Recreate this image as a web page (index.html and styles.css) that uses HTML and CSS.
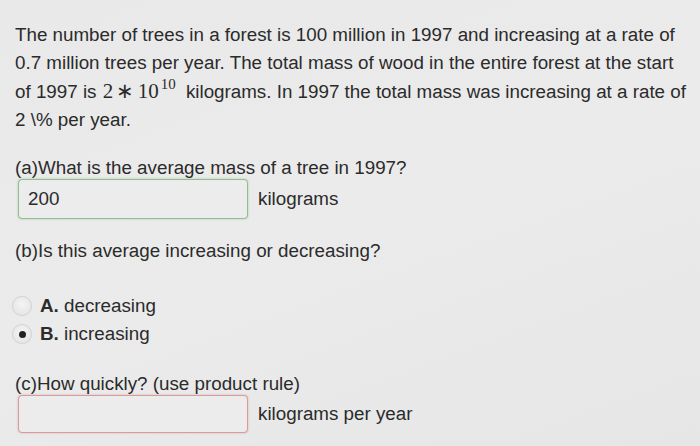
FILE: index.html
```html
<!DOCTYPE html>
<html>
<head>
<meta charset="utf-8">
<link rel="stylesheet" href="styles.css">
</head>
<body>
<div class="page">
  <p class="intro">The number of trees in a forest is 100 million in 1997 and increasing at a rate of<br>0.7 million trees per year. The total mass of wood in the entire forest at the start<br>of 1997 is <span class="math">2 ∗ 10</span><span class="sup">10</span> kilograms. In 1997 the total mass was increasing at a rate of<br>2 \% per year.</p>

  <div class="q qa">(a)What is the average mass of a tree in 1997?</div>
  <div class="answer">
    <div class="box good">200</div>
    <span class="unit">kilograms</span>
  </div>

  <div class="q qb">(b)Is this average increasing or decreasing?</div>
  <div class="options">
    <div class="opt"><span class="radio"></span><b>A.</b>&nbsp;decreasing</div>
    <div class="opt"><span class="radio on"></span><b>B.</b>&nbsp;increasing</div>
  </div>

  <div class="q qc">(c)How quickly? (use product rule)</div>
  <div class="answer">
    <div class="box bad"></div>
    <span class="unit">kilograms per year</span>
  </div>
</div>
</body>
</html>
```
FILE: styles.css
```css
html, body {
  margin: 0;
  padding: 0;
}
body {
  width: 700px;
  height: 446px;
  overflow: hidden;
  background: linear-gradient(160deg, #e9e9e9 0%, #ebebeb 50%, #e6e6e6 100%);
  color: #2b2b2b;
  font-family: "Liberation Sans", Arial, sans-serif;
  font-size: 18.8px;
}
.page {
  padding: 21px 0 0 15px;
}
.intro {
  margin: 0;
  line-height: 28px;
  white-space: nowrap;
}
.math {
  font-family: "Liberation Serif", "Times New Roman", serif;
  font-size: 21px;
  line-height: 20px;
  word-spacing: -2px;
  margin-left: 1px;
}
.sup {
  display: inline-block;
  font-family: "Liberation Serif", "Times New Roman", serif;
  font-size: 15px;
  line-height: 14px;
  vertical-align: 9px;
  margin-left: 2px;
  margin-right: 5px;
}
.q {
  line-height: 22px;
}
.qa {
  margin-top: 23px;
}
.answer {
  display: flex;
  align-items: center;
}
.box {
  box-sizing: border-box;
  width: 230px;
  height: 40px;
  margin-left: 3px;
  border-radius: 4px;
  background: #ececec;
  padding: 0 9px;
  display: flex;
  align-items: center;
}
.box.good {
  border: 1.5px solid #8fbf8f;
  box-shadow: 0 0 2px rgba(100,160,100,0.5);
}
.box.bad {
  border: 1.5px solid #d99a9a;
  box-shadow: 0 0 2px rgba(200,110,110,0.5);
}
.unit {
  margin-left: 10px;
}
.qb {
  margin-top: 21px;
}
.options {
  margin-top: 30px;
}
.opt {
  display: flex;
  align-items: center;
  height: 28px;
}
.opt b {
  font-weight: bold;
}
.radio {
  box-sizing: border-box;
  width: 20px;
  height: 20px;
  border-radius: 50%;
  margin-left: -3px;
  margin-right: 8px;
  border: 1px solid #d4d4d4;
  background: radial-gradient(circle at 50% 40%, #f4f4f4, #e2e2e2);
  box-shadow: 0 0 1px rgba(0,0,0,0.1);
  display: flex;
  align-items: center;
  justify-content: center;
}
.radio.on::after {
  content: "";
  width: 7px;
  height: 7px;
  border-radius: 50%;
  background: #222;
}
.qc {
  margin-top: 25px;
}
.qc + .answer .box {
  height: 38px;
}
```
